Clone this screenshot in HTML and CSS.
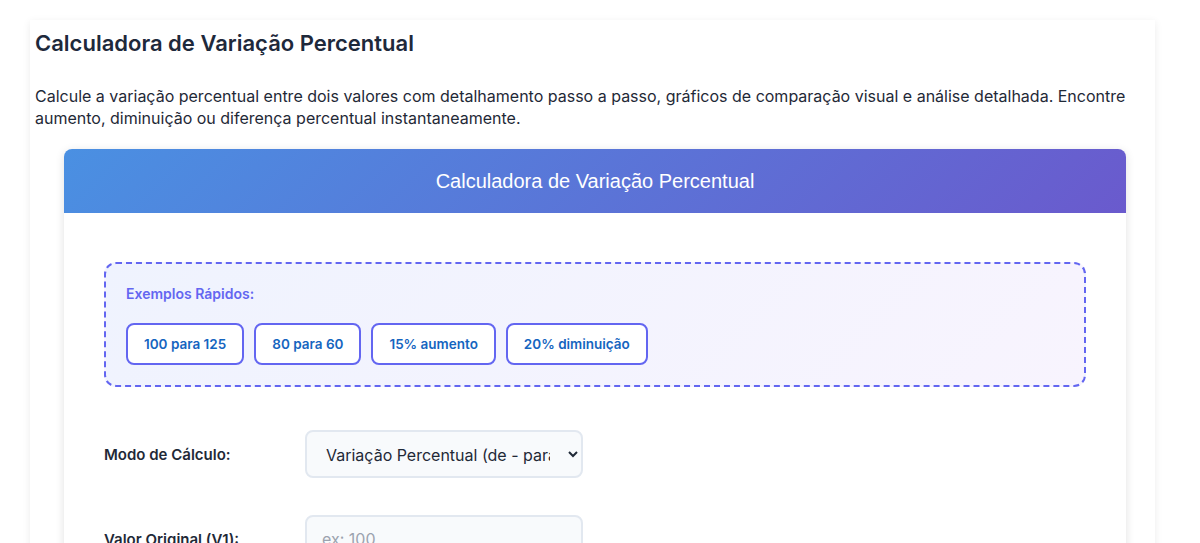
FILE: index.html
```html
<!DOCTYPE html>
<html lang="pt-BR">
<head>
    <meta charset="UTF-8">
    <meta name="viewport" content="width=device-width, initial-scale=1.0">
    <title>Calculadora de Variação Percentual</title>
    <link rel="stylesheet" href="styles.css">
</head>
<body>

<div class="page">
    <h1>Calculadora de Variação Percentual</h1>
    <p class="intro">Calcule a variação percentual entre dois valores com detalhamento passo a passo, gráficos de comparação visual e análise detalhada. Encontre aumento, diminuição ou diferença percentual instantaneamente.</p>

    <div class="calculator">
        <div class="calc-header">Calculadora de Variação Percentual</div>

        <div class="calc-body">
            <!-- Quick examples -->
            <div class="examples">
                <div class="examples-title">Exemplos Rápidos:</div>
                <div class="examples-list">
                    <button type="button" class="example-btn">100 para 125</button>
                    <button type="button" class="example-btn">80 para 60</button>
                    <button type="button" class="example-btn">15% aumento</button>
                    <button type="button" class="example-btn">20% diminuição</button>
                </div>
            </div>

            <!-- Form -->
            <div class="form-row">
                <label for="mode">Modo de Cálculo:</label>
                <select id="mode" class="field">
                    <option>Variação Percentual (de - para)</option>
                    <option>Aumento Percentual</option>
                    <option>Diminuição Percentual</option>
                    <option>Diferença Percentual</option>
                </select>
            </div>

            <div class="form-row">
                <label for="v1">Valor Original (V1):</label>
                <input type="text" id="v1" class="field" placeholder="ex: 100">
            </div>

            <div class="form-row">
                <label for="v2">Novo Valor (V2):</label>
                <input type="text" id="v2" class="field" placeholder="ex: 125">
            </div>

            <div class="form-row">
                <label for="dec">Casas Decimais:</label>
                <input type="text" id="dec" class="field" placeholder="2">
            </div>
        </div>
    </div>
</div>

</body>
</html>
```

FILE: styles.css
```css
html, body {
    margin: 0;
    background: #fff;
}
body {
    font-family: Inter, "Noto Sans", sans-serif;
    color: #1f2937;
    padding: 20px 45px 40px 30px;
}
.page {
    background: #fff;
    box-shadow: 0 2px 8px rgba(0, 0, 0, 0.08);
    padding: 9px 5px 30px;
}
h1 {
    font-size: 22px;
    font-weight: 600;
    line-height: 28px;
    margin: 0 0 28px;
    color: #1e293b;
}
.intro {
    font-size: 16px;
    line-height: 22px;
    margin: 0 0 20px;
    color: #1f2937;
}
.calculator {
    margin: 0 24px 0 29px;
    border-radius: 8px;
    overflow: hidden;
    background: #fff;
    box-shadow: 0 2px 10px rgba(0, 0, 0, 0.12);
}
.calc-header {
    background: linear-gradient(135deg, #4a90e2, #6a5acd);
    color: #fff;
    font-family: "Liberation Sans", Arial, sans-serif;
    font-size: 20px;
    height: 64px;
    line-height: 64px;
    text-align: center;
}
.calc-body {
    padding: 49px 40px 40px;
}
.examples {
    border: 2px dashed #6366f1;
    border-radius: 12px;
    background: linear-gradient(135deg, #eff3fe, #f8f4fe);
    padding: 21px 20px 20px;
    margin-bottom: 43px;
}
.examples-title {
    color: #6366f1;
    font-size: 14px;
    font-weight: 600;
    line-height: 17px;
    margin-bottom: 21px;
}
.examples-list {
    display: flex;
    flex-wrap: wrap;
    gap: 10px;
}
.example-btn {
    font-family: Inter, "Noto Sans", sans-serif;
    font-size: 13.5px;
    font-weight: 600;
    color: #1565c0;
    background: #fff;
    border: 2px solid #6366f1;
    border-radius: 8px;
    padding: 10px 16px;
    line-height: 18px;
    cursor: pointer;
}
.form-row {
    display: flex;
    align-items: center;
    margin-bottom: 37px;
}
.form-row label {
    width: 201px;
    flex-shrink: 0;
    font-size: 15px;
    font-weight: 600;
    color: #1f2937;
}
.field {
    width: 278px;
    box-sizing: border-box;
    height: 48px;
    padding: 12px 15px;
    font-family: Inter, "Noto Sans", sans-serif;
    font-size: 16px;
    color: #1f2937;
    background: #f8fafc;
    border: 2px solid #e2e8f0;
    border-radius: 8px;
}
select.field {
    padding-left: 15px;
}
.field::placeholder {
    color: #9ca3af;
}
```
